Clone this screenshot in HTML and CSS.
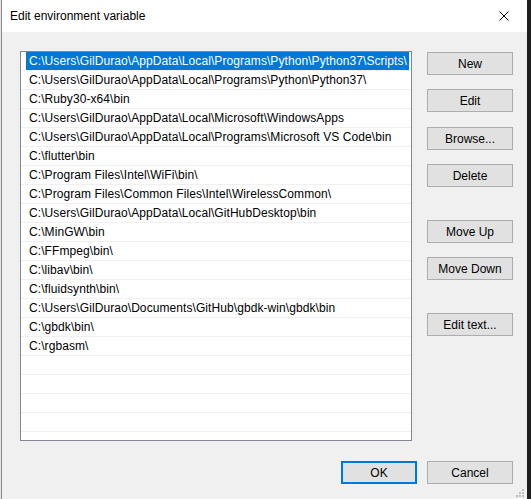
FILE: index.html
```html
<!DOCTYPE html>
<html lang="en">
<head>
	<meta charset="UTF-8">
	<title>Edit environment variable</title>
	<link rel="stylesheet" href="styles.css">
</head>
<body>
	<div class="screen">
		<div class="edge"></div>
		<div class="window">
			<div class="titlebar">
				<span class="title">Edit environment variable</span>
				<span class="close">
					<svg width="10" height="10" viewBox="0 0 10 10"><path d="M0.5 0.5 L9.5 9.5 M9.5 0.5 L0.5 9.5" stroke="#000" stroke-width="1" fill="none"/></svg>
				</span>
			</div>
			<div class="client">
				<div class="main">
					<div class="list">
						<div class="row selected"><span class="cell">C:\Users\GilDurao\AppData\Local\Programs\Python\Python37\Scripts\</span></div>
						<div class="row"><span class="cell">C:\Users\GilDurao\AppData\Local\Programs\Python\Python37\</span></div>
						<div class="row"><span class="cell">C:\Ruby30-x64\bin</span></div>
						<div class="row"><span class="cell">C:\Users\GilDurao\AppData\Local\Microsoft\WindowsApps</span></div>
						<div class="row"><span class="cell">C:\Users\GilDurao\AppData\Local\Programs\Microsoft VS Code\bin</span></div>
						<div class="row"><span class="cell">C:\flutter\bin</span></div>
						<div class="row"><span class="cell">C:\Program Files\Intel\WiFi\bin\</span></div>
						<div class="row"><span class="cell">C:\Program Files\Common Files\Intel\WirelessCommon\</span></div>
						<div class="row"><span class="cell">C:\Users\GilDurao\AppData\Local\GitHubDesktop\bin</span></div>
						<div class="row"><span class="cell">C:\MinGW\bin</span></div>
						<div class="row"><span class="cell">C:\FFmpeg\bin\</span></div>
						<div class="row"><span class="cell">C:\libav\bin\</span></div>
						<div class="row"><span class="cell">C:\fluidsynth\bin\</span></div>
						<div class="row"><span class="cell">C:\Users\GilDurao\Documents\GitHub\gbdk-win\gbdk\bin</span></div>
						<div class="row"><span class="cell">C:\gbdk\bin\</span></div>
						<div class="row"><span class="cell">C:\rgbasm\</span></div>
						<div class="row"><span class="cell"></span></div>
						<div class="row"><span class="cell"></span></div>
						<div class="row"><span class="cell"></span></div>
						<div class="row"><span class="cell"></span></div>
					</div>
					<div class="side">
						<button class="btn">New</button>
						<button class="btn mt14">Edit</button>
						<button class="btn mt15">Browse...</button>
						<button class="btn mt14">Delete</button>
						<button class="btn mt33">Move Up</button>
						<button class="btn mt14">Move Down</button>
						<button class="btn mt33">Edit text...</button>
					</div>
				</div>
				<div class="footer">
					<button class="btn btn-ok">OK</button>
					<button class="btn">Cancel</button>
				</div>
				<svg class="grip" width="8" height="8" viewBox="0 0 8 8">
					<rect x="6" y="0" width="2" height="2" fill="#bdbdbd"/>
					<rect x="3" y="3" width="2" height="2" fill="#bdbdbd"/>
					<rect x="6" y="3" width="2" height="2" fill="#bdbdbd"/>
					<rect x="0" y="6" width="2" height="2" fill="#bdbdbd"/>
					<rect x="3" y="6" width="2" height="2" fill="#bdbdbd"/>
					<rect x="6" y="6" width="2" height="2" fill="#bdbdbd"/>
				</svg>
			</div>
		</div>
		<div class="desktop"></div>
	</div>
</body>
</html>
```

FILE: styles.css
```css
body {
	margin: 0;
	padding: 0;
	font-family: "Liberation Sans", Arial, sans-serif;
	font-size: 12px;
	color: #000;
}

.screen {
	display: flex;
	width: 531px;
	height: 499px;
	overflow: hidden;
}

.edge {
	width: 1px;
	background-color: #e4e4e4;
}

.window {
	width: 525px;
	border-left: 1px solid #8a8a8a;
	display: flex;
	flex-direction: column;
}

.desktop {
	width: 4px;
	background-color: #1e1e1e;
}

.titlebar {
	height: 32px;
	background-color: #fff;
	display: flex;
	align-items: center;
	justify-content: space-between;
}

.title {
	padding-left: 8px;
	line-height: 32px;
}

.close {
	width: 46px;
	height: 32px;
	display: flex;
	align-items: center;
	justify-content: center;
	margin-top: -1px;
}

.client {
	flex: 1;
	background-color: #f0f0f0;
	position: relative;
}

.main {
	display: flex;
	padding: 19px 0 0 18px;
}

.list {
	width: 390px;
	height: 388px;
	border: 1px solid #828790;
	background-color: #fff;
}

.row {
	height: 18px;
	border-bottom: 1px solid #f0f0f0;
	display: flex;
}

.cell {
	flex: 1;
	margin: 0 2px 0 5px;
	padding-left: 3px;
	line-height: 18px;
	letter-spacing: 0.08px;
	white-space: nowrap;
	overflow: hidden;
}

.selected .cell {
	background-color: #0078d7;
	color: #fff;
}

.side {
	display: flex;
	flex-direction: column;
	margin-left: 15px;
	padding-top: 1px;
}

.btn {
	width: 86px;
	height: 23px;
	border: 1px solid #adadad;
	background-color: #e1e1e1;
	font-family: "Liberation Sans", Arial, sans-serif;
	font-size: 12px;
	color: #000;
	padding: 0;
	margin: 0;
}

.mt14 {
	margin-top: 14px;
}

.mt15 {
	margin-top: 15px;
}

.mt33 {
	margin-top: 33px;
}

.footer {
	display: flex;
	justify-content: flex-end;
	gap: 10px;
	padding: 20px 14px 0 0;
}

.btn-ok {
	width: 76px;
	border: 2px solid #0078d7;
}

.grip {
	position: absolute;
	right: 3px;
	bottom: 2px;
}
```
